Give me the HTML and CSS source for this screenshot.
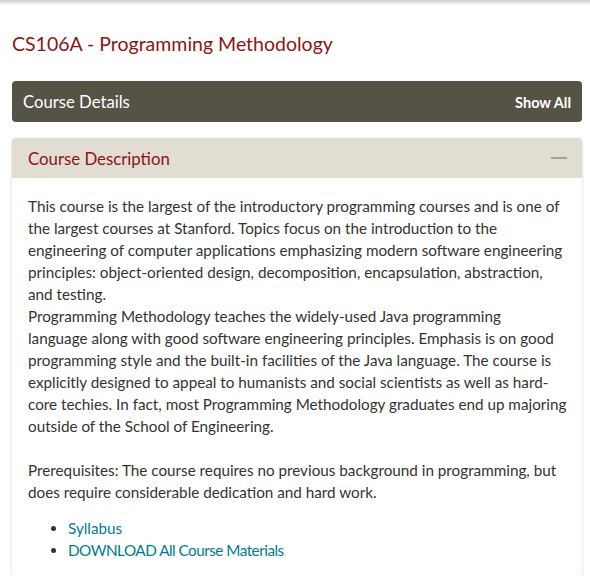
FILE: index.html
```html
<!DOCTYPE html>
<html lang="en">
<head>
<meta charset="utf-8">
<title>CS106A - Programming Methodology</title>
<link rel="stylesheet" href="styles.css">
</head>
<body>
<div class="topbar"></div>
<main class="page">
  <h1 class="course-title">CS106A - Programming Methodology</h1>
  <div class="details-bar">
    <span class="details-title">Course Details</span>
    <span class="show-all">Show All</span>
  </div>
  <section class="card">
    <div class="card-header">
      <span class="card-title">Course Description</span>
      <span class="collapse-icon"></span>
    </div>
    <div class="card-body">
      <p class="desc">This course is the largest of the introductory programming courses and is one of<br>the largest courses at Stanford. Topics focus on the introduction to the<br>engineering of computer applications emphasizing modern software engineering<br>principles: object-oriented design, decomposition, encapsulation, abstraction,<br>and testing.<br>Programming Methodology teaches the widely-used Java programming<br>language along with good software engineering principles. Emphasis is on good<br>programming style and the built-in facilities of the Java language. The course is<br>explicitly designed to appeal to humanists and social scientists as well as hard-<br>core techies. In fact, most Programming Methodology graduates end up majoring<br>outside of the School of Engineering.</p>
      <p class="desc">Prerequisites: The course requires no previous background in programming, but<br>does require considerable dedication and hard work.</p>
      <ul class="links">
        <li><a href="#">Syllabus</a></li>
        <li><a href="#" class="caps-link">DOWNLOAD All Course Materials</a></li>
      </ul>
    </div>
  </section>
</main>
</body>
</html>
```
FILE: styles.css
```css
html, body {
  margin: 0;
  padding: 0;
  background: #fff;
}
body {
  font-family: Lato, "Open Sans", sans-serif;
  color: #333;
}
.topbar {
  height: 5px;
  background: linear-gradient(#cfcdca, #ffffff);
}
.page {
  padding: 0 8px 0 12px;
}
.course-title {
  margin: 25px 0 0;
  font-size: 19.5px;
  line-height: 28px;
  font-weight: 400;
  color: #8c1515;
}
.details-bar {
  margin-top: 23px;
  height: 41px;
  padding: 1px 11px 0;
  box-sizing: border-box;
  background: #555246;
  border-radius: 4px;
  display: flex;
  align-items: center;
  justify-content: space-between;
  color: #fff;
}
.details-title {
  font-size: 16.7px;
}
.show-all {
  font-size: 14.5px;
  font-weight: 700;
}
.card {
  margin-top: 16px;
  border-radius: 4px;
  box-shadow: 0 1px 3px rgba(0, 0, 0, 0.22);
  overflow: hidden;
}
.card-header {
  height: 40px;
  padding: 0 15px 0 16px;
  background: #e1ddd3;
  display: flex;
  align-items: center;
  justify-content: space-between;
}
.card-title {
  font-size: 16.8px;
  color: #8c1515;
}
.collapse-icon {
  width: 16px;
  height: 2px;
  background: #a3a09a;
}
.card-body {
  padding: 17px 16px 14px;
  font-size: 15.25px;
  line-height: 22px;
}
.desc {
  margin: 0 0 22px;
  white-space: nowrap;
}
.desc:last-of-type {
  margin-bottom: 0;
}
.links {
  margin: 14px 0 0;
  padding-left: 40px;
}
.links a {
  color: #007c92;
  text-decoration: none;
}
.links .caps-link {
  letter-spacing: -0.5px;
}
```
